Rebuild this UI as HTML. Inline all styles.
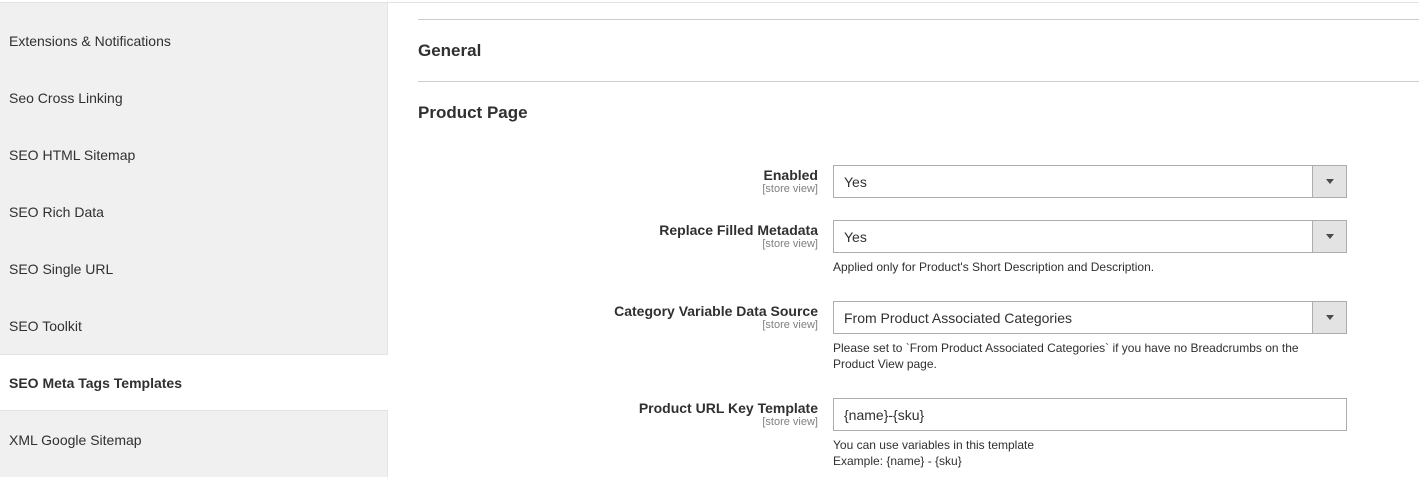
<!DOCTYPE html>
<html><head><meta charset="utf-8"><style>
*{margin:0;padding:0;box-sizing:border-box}
body{width:1419px;height:477px;overflow:hidden;background:#fff;font-family:"Liberation Sans",sans-serif;color:#303030;position:relative}
.abs{position:absolute}
.side{left:0;top:3px;width:388px;height:474px;background:#f0f0f0;border-right:1px solid #e3e3e3}
.si{position:absolute;left:9px;font-size:14px;color:#303030}
.act{left:0;top:354px;width:388px;height:57px;background:#fff;border-top:1px solid #e3e3e3;border-bottom:1px solid #e3e3e3}
.hr{left:418px;right:0;height:1px;background:#cccccc}
.h{left:418px;font-size:17px;font-weight:bold;color:#303030}
.lab{right:601px;text-align:right;font-size:14px;font-weight:bold;color:#303030;line-height:16px}
.lab small{display:block;font-size:11px;font-weight:normal;color:#808080;line-height:13px}
.in{left:833px;width:514px;height:33px;border:1px solid #adadad;font-size:14px;padding:8px 10px;line-height:16px;background:#fff}
.btn{position:absolute;right:0;top:0;width:34px;height:31px;background:#e3e3e3;border-left:1px solid #adadad}
.btn:after{content:"";position:absolute;left:13px;top:13px;border-left:4px solid transparent;border-right:4px solid transparent;border-top:5px solid #514943}
.note{left:833px;font-size:12px;color:#303030;line-height:16px}
</style></head><body>
<div class="abs" style="left:0;top:2px;width:1419px;height:1px;background:#e3e3e3"></div>
<div class="abs side"></div>
<div class="abs act"></div>
<div class="si" style="top:33px">Extensions &amp; Notifications</div>
<div class="si" style="top:90px">Seo Cross Linking</div>
<div class="si" style="top:147px">SEO HTML Sitemap</div>
<div class="si" style="top:204px">SEO Rich Data</div>
<div class="si" style="top:261px">SEO Single URL</div>
<div class="si" style="top:318px">SEO Toolkit</div>
<div class="si" style="top:375px;font-weight:bold">SEO Meta Tags Templates</div>
<div class="si" style="top:432px">XML Google Sitemap</div>

<div class="abs hr" style="top:19px"></div>
<div class="abs h" style="top:41px">General</div>
<div class="abs hr" style="top:81px"></div>
<div class="abs h" style="top:103px">Product Page</div>

<div class="abs lab" style="top:167px">Enabled<small>[store view]</small></div>
<div class="abs in" style="top:165px">Yes<div class="btn"></div></div>

<div class="abs lab" style="top:222px">Replace Filled Metadata<small>[store view]</small></div>
<div class="abs in" style="top:220px">Yes<div class="btn"></div></div>
<div class="abs note" style="top:259px">Applied only for Product's Short Description and Description.</div>

<div class="abs lab" style="top:303px">Category Variable Data Source<small>[store view]</small></div>
<div class="abs in" style="top:301px">From Product Associated Categories<div class="btn"></div></div>
<div class="abs note" style="top:340px">Please set to `From Product Associated Categories` if you have no Breadcrumbs on the<br>Product View page.</div>

<div class="abs lab" style="top:400px">Product URL Key Template<small>[store view]</small></div>
<div class="abs in" style="top:398px">{name}-{sku}</div>
<div class="abs note" style="top:437px">You can use variables in this template<br>Example: {name} - {sku}</div>
</body></html>
